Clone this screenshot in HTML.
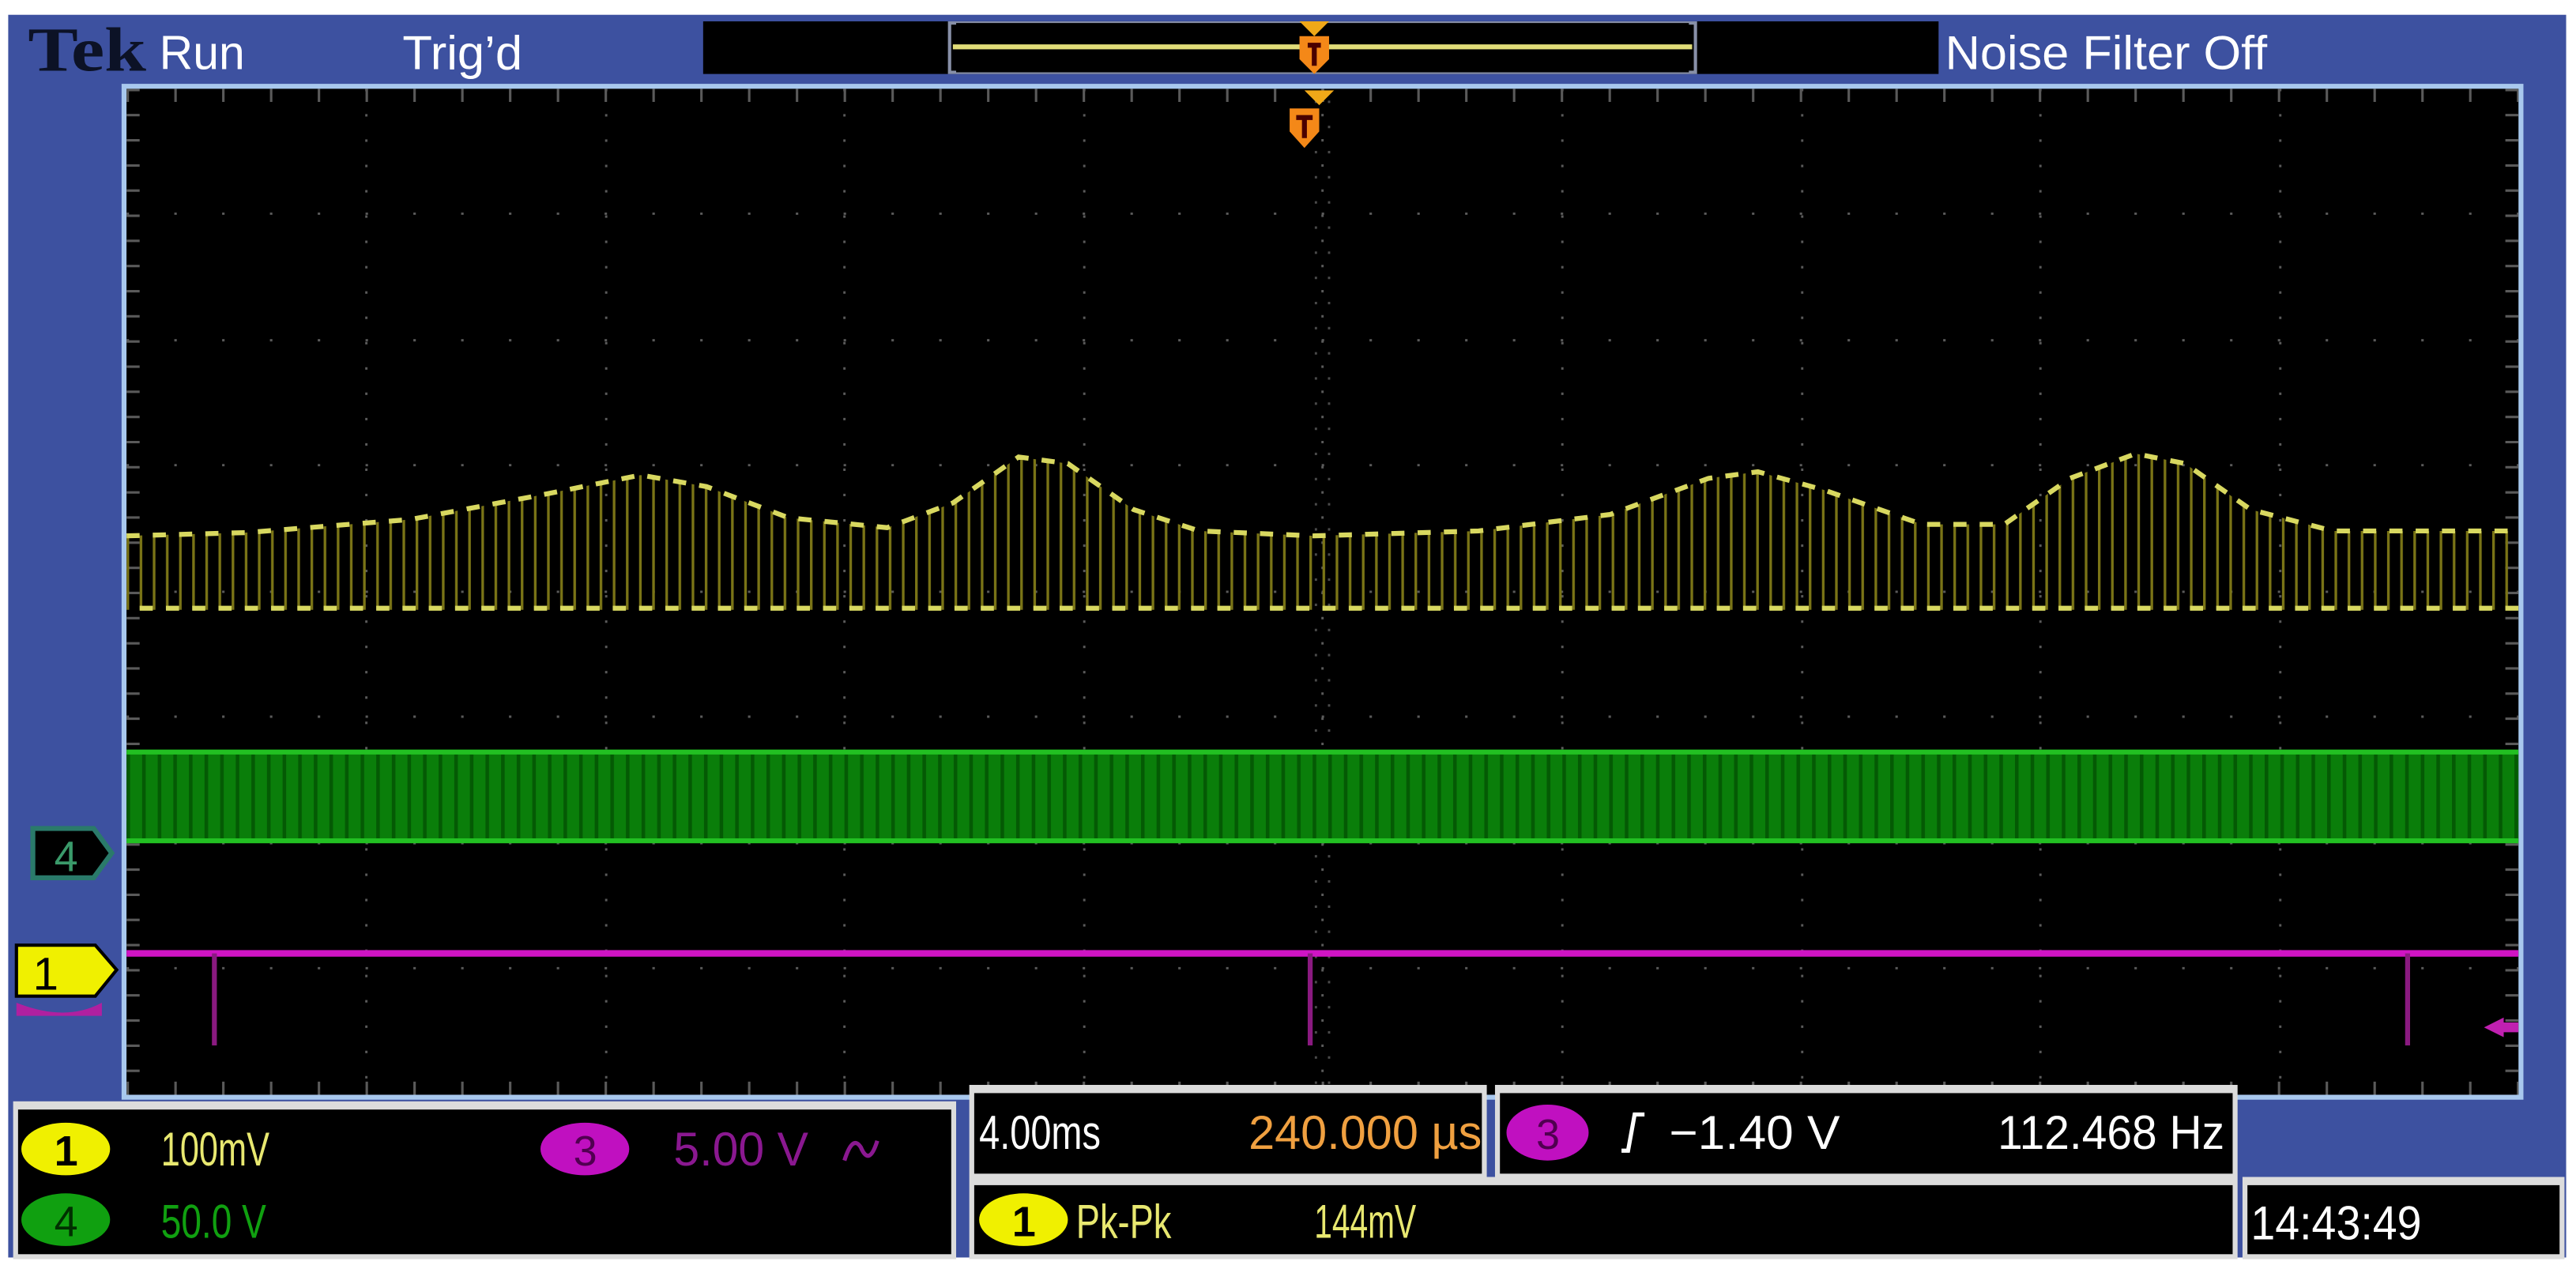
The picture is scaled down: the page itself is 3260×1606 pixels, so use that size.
<!DOCTYPE html>
<html><head><meta charset="utf-8"><style>
html,body{margin:0;padding:0;background:#fff;width:3260px;height:1606px;overflow:hidden}
svg{display:block}
text{font-family:"Liberation Sans Narrow","Liberation Sans",sans-serif}
</style></head><body>
<svg width="3260" height="1606" viewBox="0 0 1568 772" preserveAspectRatio="none" xmlns="http://www.w3.org/2000/svg">
<defs>
<pattern id="pulse" x="77" y="0" width="16" height="772" patternUnits="userSpaceOnUse">
<rect x="0" y="0" width="1.6" height="772" fill="#7a7416"/>
<rect x="8" y="0" width="1.6" height="772" fill="#7a7416"/>
</pattern>
<pattern id="gstripe" x="77" y="0" width="9.5" height="772" patternUnits="userSpaceOnUse">
<rect x="0" y="0" width="9.5" height="772" fill="#0a7e0a"/>
<rect x="0" y="0" width="2.2" height="772" fill="#045a04"/>
</pattern>
<clipPath id="plotclip"><rect x="77" y="54" width="1456" height="612"/></clipPath>
</defs>
<rect x="5" y="9" width="1557" height="756" fill="#3d51a0"/>
<text x="17" y="43" style="font-family:'Liberation Serif',serif;font-weight:bold" font-size="38" fill="#0c1226" textLength="72" lengthAdjust="spacingAndGlyphs">Tek</text>
<text x="97" y="42" font-size="29" fill="#fff" textLength="52" lengthAdjust="spacingAndGlyphs">Run</text>
<text x="245" y="42" font-size="29" fill="#fff" textLength="73" lengthAdjust="spacingAndGlyphs">Trig’d</text>
<rect x="428" y="13" width="752" height="32" fill="#000"/>
<rect x="578" y="14" width="454" height="30" fill="none" stroke="#8890a8" stroke-width="2"/>
<rect x="582" y="14" width="446" height="30" fill="#000"/>
<rect x="580" y="27" width="450" height="3" fill="#e0dc78"/>
<text x="1184" y="42" font-size="29" fill="#fff" textLength="196" lengthAdjust="spacingAndGlyphs">Noise Filter Off</text>
<rect x="74" y="51" width="1462" height="618" fill="#a8c8ee"/>
<rect x="77" y="54" width="1456" height="612" fill="#000"/>
<g clip-path="url(#plotclip)" stroke="#5a5a5a" stroke-width="1.4">
<g stroke-dasharray="1.5 13.9">
<line x1="223" y1="54" x2="223" y2="666"/><line x1="369" y1="54" x2="369" y2="666"/><line x1="514" y1="54" x2="514" y2="666"/><line x1="660" y1="54" x2="660" y2="666"/><line x1="951" y1="54" x2="951" y2="666"/><line x1="1097" y1="54" x2="1097" y2="666"/><line x1="1242" y1="54" x2="1242" y2="666"/><line x1="1388" y1="54" x2="1388" y2="666"/>
</g>
<g stroke-dasharray="1.5 27.6">
<line x1="77" y1="130" x2="1533" y2="130"/><line x1="77" y1="207" x2="1533" y2="207"/><line x1="77" y1="283" x2="1533" y2="283"/><line x1="77" y1="436" x2="1533" y2="436"/><line x1="77" y1="513" x2="1533" y2="513"/><line x1="77" y1="589" x2="1533" y2="589"/>
</g>
<line x1="805" y1="54" x2="805" y2="666" stroke-dasharray="1.5 13.8"/>
<line x1="77" y1="360" x2="1533" y2="360" stroke-dasharray="1.5 27.6"/>
<path d="M801 0V772M809 0V772" stroke-dasharray="1.5 13.8" stroke="#4a4a4a"/>
<line x1="77" y1="58" x2="1533" y2="58" stroke-width="8" stroke-dasharray="1.5 27.6"/>
<line x1="77" y1="662" x2="1533" y2="662" stroke-width="8" stroke-dasharray="1.5 27.6"/>
<line x1="81" y1="54" x2="81" y2="666" stroke-width="8" stroke-dasharray="1.5 13.8"/>
<line x1="1529" y1="54" x2="1529" y2="666" stroke-width="8" stroke-dasharray="1.5 13.8"/>
</g>
<g clip-path="url(#plotclip)">
<polygon fill="url(#pulse)" points="77,326 150,324 250,316 330,301 390,289 430,296 480,315 540,321 580,306 620,278 650,282 690,310 730,323 800,326 900,323 980,313 1040,291 1070,287 1110,298 1170,319 1220,319 1260,291 1300,276 1330,282 1370,310 1420,323 1533,323 1533,371 77,371"/>
<polyline fill="none" stroke="#d8d860" stroke-width="3" stroke-dasharray="8 8" points="77,326 150,324 250,316 330,301 390,289 430,296 480,315 540,321 580,306 620,278 650,282 690,310 730,323 800,326 900,323 980,313 1040,291 1070,287 1110,298 1170,319 1220,319 1260,291 1300,276 1330,282 1370,310 1420,323 1533,323"/>
<line x1="77" y1="370" x2="1533" y2="370" stroke="#d8d860" stroke-width="3" stroke-dasharray="8 8" stroke-dashoffset="8"/>
<rect x="77" y="458" width="1456" height="54" fill="url(#gstripe)"/>
<rect x="77" y="456" width="1456" height="3" fill="#22c022"/>
<rect x="77" y="510" width="1456" height="3" fill="#22c022"/>
<rect x="77" y="578" width="1456" height="4" fill="#d014c4"/>
<rect x="129" y="580" width="3" height="56" fill="#8a1a80"/>
<rect x="796" y="580" width="3" height="56" fill="#8a1a80"/>
<rect x="1464" y="580" width="3" height="56" fill="#8a1a80"/>
<path d="M1512 625 L1524 619 V622 H1533 V628 H1524 V631Z" fill="#c020b0"/>
</g>
<path d="M791 13 H809 L800 22Z" fill="#f0a818"/>
<path d="M791 22 H809 V36 L800 45 L791 36Z" fill="#f48818"/>
<path d="M796 26 H804 V29 H801.5 V40 H798.5 V29 H796Z" fill="#4a0000"/>
<path d="M794 55 H812 L803 64Z" fill="#f0a818"/>
<path d="M785 66 H803 V80 L794 90 L785 80Z" fill="#f48818"/>
<path d="M789 70 H799 V73 H795.5 V84 H792.5 V73 H789Z" fill="#4a0000"/>
<path d="M20 504 H57 L68 519 L57 534 H20Z" fill="#000" stroke="#2a7a6a" stroke-width="3"/>
<text x="33" y="530" font-size="26" fill="#3a9a6a">4</text>
<path d="M10 610 Q40 622 62 610 V618 H10Z" fill="#b020a0"/>
<path d="M10 575 H58 L71 590 L58 606 H10Z" fill="#f0f000" stroke="#000" stroke-width="2"/>
<text x="20" y="602" font-size="28" fill="#000">1</text>
<rect x="8" y="670" width="574" height="96" fill="#dcdcdc"/>
<rect x="11" y="675" width="568" height="88" fill="#000"/>
<ellipse cx="40" cy="699" rx="27" ry="16" fill="#f0f000"/>
<text x="33" y="709" font-size="26" font-weight="bold" fill="#000">1</text>
<text x="98" y="709" font-size="29" fill="#e8e870" textLength="66" lengthAdjust="spacingAndGlyphs">100mV</text>
<ellipse cx="356" cy="699" rx="27" ry="16" fill="#c010c0"/>
<text x="349" y="709" font-size="26" fill="#500050">3</text>
<text x="410" y="709" font-size="29" fill="#8a1890" textLength="82" lengthAdjust="spacingAndGlyphs">5.00 V</text>
<path d="M514 706 Q519 690 524 698 Q529 710 534 694" fill="none" stroke="#8a1890" stroke-width="2.5"/>
<ellipse cx="40" cy="742" rx="27" ry="16" fill="#10a010"/>
<text x="33" y="752" font-size="26" fill="#003000">4</text>
<text x="98" y="753" font-size="29" fill="#10a010" textLength="64" lengthAdjust="spacingAndGlyphs">50.0 V</text>
<rect x="590" y="660" width="315" height="56" fill="#dcdcdc"/>
<rect x="593" y="665" width="309" height="49" fill="#000"/>
<text x="596" y="699" font-size="29" fill="#fff" textLength="74" lengthAdjust="spacingAndGlyphs">4.00ms</text>
<text x="760" y="699" font-size="29" fill="#f0a040" textLength="142" lengthAdjust="spacingAndGlyphs">240.000 µs</text>
<rect x="910" y="660" width="452" height="56" fill="#dcdcdc"/>
<rect x="913" y="665" width="446" height="49" fill="#000"/>
<ellipse cx="942" cy="689" rx="25" ry="17" fill="#c010c0"/>
<text x="935" y="699" font-size="26" fill="#500050">3</text>
<path d="M987 700 H991 L995 678 H1001" fill="none" stroke="#fff" stroke-width="2.5"/>
<text x="1016" y="699" font-size="29" fill="#fff" textLength="104" lengthAdjust="spacingAndGlyphs">−1.40 V</text>
<text x="1216" y="699" font-size="29" fill="#fff" textLength="138" lengthAdjust="spacingAndGlyphs">112.468 Hz</text>
<rect x="590" y="716" width="772" height="50" fill="#dcdcdc"/>
<rect x="593" y="721" width="766" height="42" fill="#000"/>
<ellipse cx="623" cy="742" rx="27" ry="16" fill="#f0f000"/>
<text x="616" y="752" font-size="26" font-weight="bold" fill="#000">1</text>
<text x="655" y="753" font-size="29" fill="#e8e870" textLength="58" lengthAdjust="spacingAndGlyphs">Pk-Pk</text>
<text x="800" y="753" font-size="29" fill="#e8e870" textLength="62" lengthAdjust="spacingAndGlyphs">144mV</text>
<rect x="1365" y="716" width="196" height="50" fill="#dcdcdc"/>
<rect x="1368" y="721" width="190" height="42" fill="#000"/>
<text x="1370" y="754" font-size="29" fill="#fff" textLength="104" lengthAdjust="spacingAndGlyphs">14:43:49</text>
</svg>
</body></html>
